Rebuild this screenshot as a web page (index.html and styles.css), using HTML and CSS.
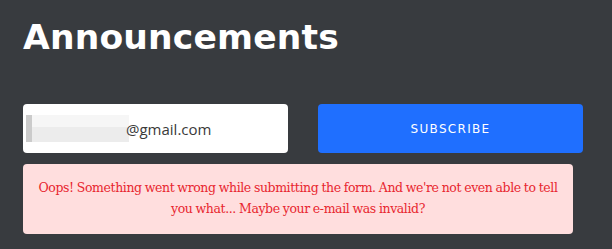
FILE: index.html
```html
<!DOCTYPE html>
<html lang="en">
<head>
    <meta charset="UTF-8">
    <meta name="viewport" content="width=device-width, initial-scale=1.0">
    <title>Announcements</title>
    <link rel="stylesheet" href="styles.css">
</head>
<body>
    <section class="announce">
        <h1>Announcements</h1>

        <!-- Subscribe form -->
        <form class="subscribe-form">
            <div class="email-field">
                <span class="blur">
                    <span class="blur-edge"></span>
                    <span class="blur-cells"></span>
                </span>
                <span class="email-domain">@gmail.com</span>
            </div>
            <button type="button" class="subscribe-btn">Subscribe</button>
        </form>

        <!-- Error message -->
        <div class="form-error">
            Oops! Something went wrong while submitting the form. And we're not even able to tell you what... Maybe your e-mail was invalid?
        </div>
    </section>
</body>
</html>
```

FILE: styles.css
```css
* { box-sizing: border-box;
}

body {
    margin: 0;
    background: #383b3f;
    font-family: 'DejaVu Sans', sans-serif;
    color: #333;
}
.announce {
    padding: 14px 29px 0 23px;
}
h1 {
    margin: 0 0 44px;
    font-size: 34.5px;
    font-weight: bold;
    color: #fff;
    line-height: 46px;
    letter-spacing: 0.2px;
}
.subscribe-form {
    display: grid;
    grid-template-columns: 1fr 1fr;
    gap: 30px;
    margin-bottom: 11px;
}
.email-field {
    height: 49px;
    background: #fff;
    border-radius: 4px;
    display: flex;
    align-items: center;
    padding-left: 3px;
}
.blur {
    display: flex;
    height: 27px;
    width: 103px;
}
.blur-edge {
    width: 6px;
    background: #cbcbcb;
}
.blur-cells {
    flex: 1;
    background: linear-gradient(#f6f6f6 0 12px, #ececec 12px 100%);
}
.email-domain {
    font-family: 'Open Sans', sans-serif;
    font-size: 15px;
    color: #3a3a3a;
    margin-left: -3px;
}
.subscribe-btn {
    height: 49px;
    border: none;
    border-radius: 4px;
    background: #1f6fff;
    color: #fff;
    font-family: 'DejaVu Sans', sans-serif;
    font-size: 12px;
    letter-spacing: 1.3px;
    text-transform: uppercase;
    cursor: pointer;
}
.form-error {
    margin-right: 10px;
    padding: 13px 10px 15px;
    background: #ffdede;
    border-radius: 4px;
    color: #e8262f;
    font-family: 'DejaVu Serif', serif;
    font-size: 12.5px;
    letter-spacing: -0.4px;
    word-spacing: -0.5px;
    line-height: 21px;
    text-align: center;
}
```
